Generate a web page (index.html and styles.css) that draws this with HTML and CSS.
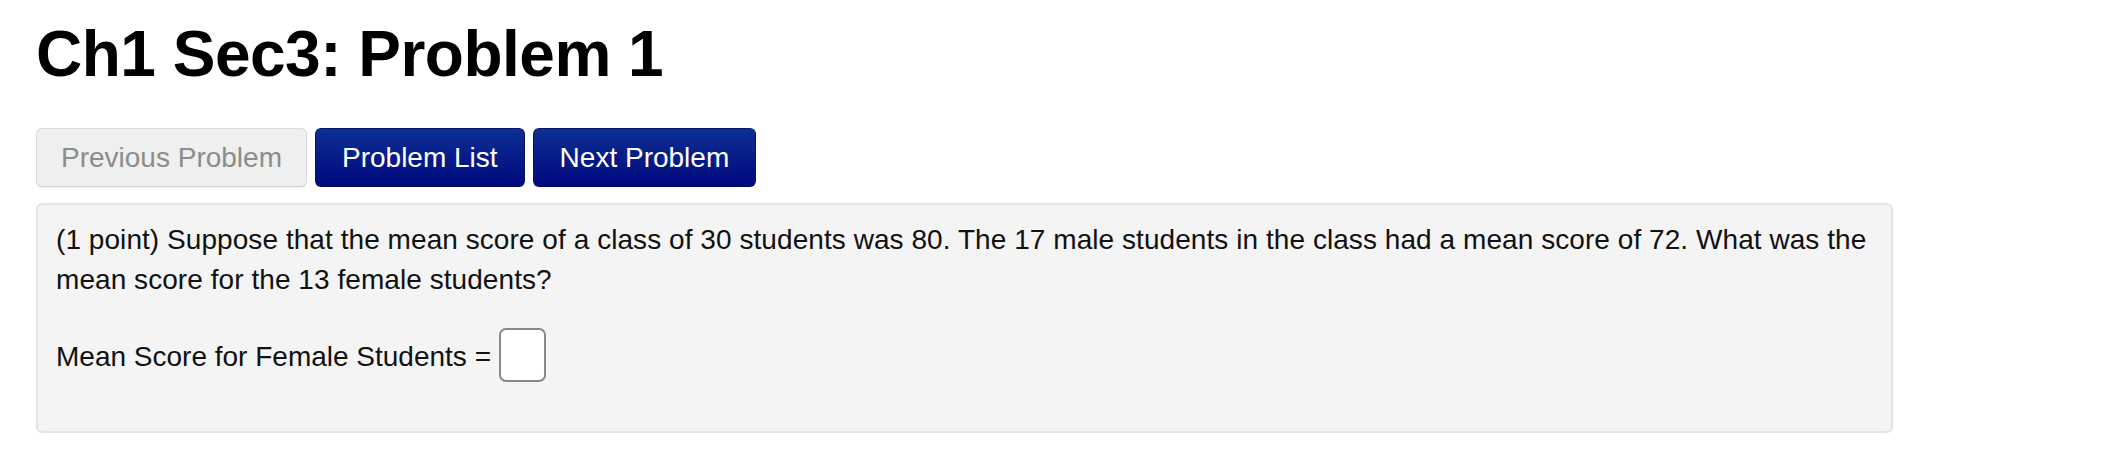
FILE: index.html
```html
<!DOCTYPE html>
<html lang="en">
<head>
<meta charset="utf-8">
<title>Ch1 Sec3: Problem 1</title>
<link rel="stylesheet" href="styles.css">
</head>
<body>
<div class="page">
  <h1 class="title">Ch1 Sec3: Problem 1</h1>
  <div class="nav">
    <span class="btn btn-disabled">Previous Problem</span>
    <a class="btn btn-primary" href="#">Problem List</a>
    <a class="btn btn-primary" href="#">Next Problem</a>
  </div>
  <div class="well">
    <p class="question">(1 point) Suppose that the mean score of a class of 30 students was 80. The 17 male students in the class had a mean score of 72. What was the mean score for the 13 female students?</p>
    <p class="answer">Mean Score for Female Students = <input class="answer-box" type="text" aria-label="Mean Score for Female Students"></p>
  </div>
</div>
</body>
</html>
```
FILE: styles.css
```css
html, body {
  margin: 0;
  padding: 0;
  background: #ffffff;
}
body {
  font-family: "Liberation Sans", Arial, Helvetica, sans-serif;
  color: #111111;
}
.page {
  padding: 0 36px;
}
.title {
  margin: 18px 0 0;
  font-size: 64px;
  line-height: 72px;
  font-weight: bold;
  color: #000000;
  letter-spacing: -0.5px;
}
.nav {
  display: flex;
  gap: 8px;
  margin-top: 38px;
}
.btn {
  display: inline-block;
  box-sizing: border-box;
  height: 59px;
  padding: 8px 26px;
  font-size: 28px;
  line-height: 41px;
  border-radius: 6px;
  text-decoration: none;
  border: 1px solid transparent;
}
.btn-disabled {
  color: #8c8c8c;
  background: #efefef;
  border-color: #dadada #dadada #cfcfcf;
  box-shadow: 0 1px 1px rgba(0,0,0,0.06);
  padding-left: 24px;
  padding-right: 24px;
}
.btn-primary {
  color: #ffffff;
  background: linear-gradient(#0d2f93, #00097e);
  border-color: #05166b #05166b #000650;
}
.well {
  box-sizing: border-box;
  width: 1857px;
  margin-top: 16px;
  padding: 15px 18px 18px;
  background: #f4f4f4;
  border: 2px solid #e4e4e4;
  border-radius: 6px;
  font-size: 28px;
  line-height: 40px;
}
.question {
  margin: 0 0 28px;
  letter-spacing: 0.06px;
}
.answer {
  margin: 0 0 23px;
}
.answer-box {
  box-sizing: border-box;
  width: 47px;
  height: 54px;
  margin: 0 0 8px;
  padding: 0 6px;
  vertical-align: middle;
  background: #ffffff;
  border: 2px solid #888888;
  border-radius: 7px;
  font: inherit;
}
```
